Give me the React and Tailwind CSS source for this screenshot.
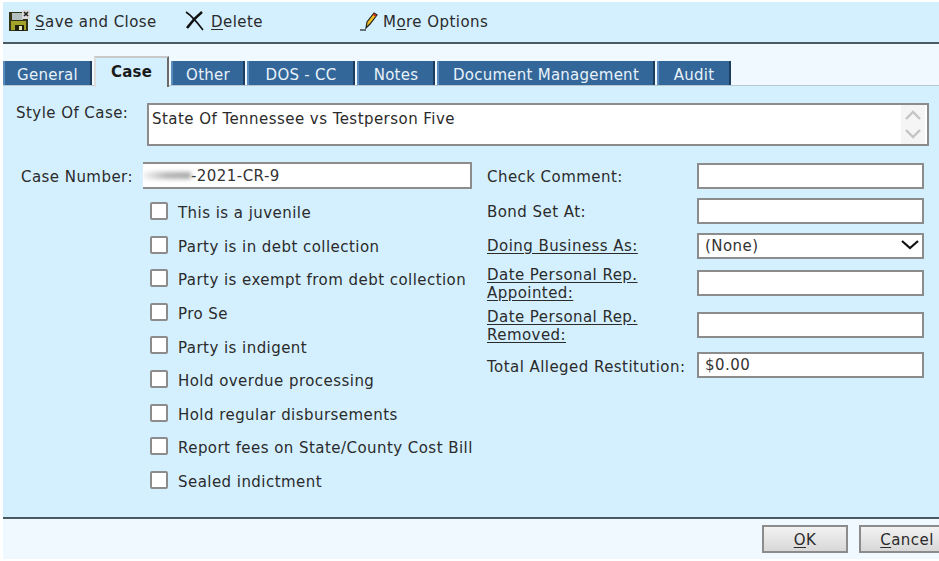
import React from 'react';

const SaveIcon = () => (
    <svg width="22" height="22" viewBox="0 0 22 22" className="shrink-0">
        <path d="M1 2h19v19H1z" fill="#33331a" />
        <path d="M4 3h11v7H4z" fill="#b4c0c0" />
        <path d="M3 11h15v9H3z" fill="#a3a32a" />
        <path d="M7 15h9v6H7z" fill="#20200f" />
        <path d="M11 16h3v4h-3z" fill="#e5e5c0" />
        <path d="M14 0h8v9h-8z" fill="#dcdcdc" />
        <path d="M16 2l4 4M20 2l-4 4" stroke="#222" strokeWidth="1.6" />
    </svg>
);

const DeleteIcon = () => (
    <svg width="20" height="20" viewBox="0 0 20 20" className="shrink-0">
        <path d="M1 1c6 4 11 10 17 18" stroke="#111" strokeWidth="1.6" fill="none" />
        <path d="M17 1C12 5 7 10 2 17" stroke="#111" strokeWidth="2.6" fill="none" />
    </svg>
);

const PencilIcon = () => (
    <svg width="20" height="20" viewBox="0 0 20 20" className="shrink-0">
        <path d="M1 19h6" stroke="#222" strokeWidth="1.2" />
        <path d="M7 17l1-6 7-9 3 2-7 9z" fill="#f0c020" stroke="#222" strokeWidth="1.2" />
        <path d="M14 3l3 2" stroke="#c03020" strokeWidth="2" />
    </svg>
);

const Hotkey = ({ text }) => (
    <>
        <span className="underline underline-offset-2">{text[0]}</span>
        {text.slice(1)}
    </>
);

const tabs = [
    { label: 'General', w: 'w-[89px]' },
    { label: 'Case', w: 'w-[75px]', active: true },
    { label: 'Other', w: 'w-[74px]' },
    { label: 'DOS - CC', w: 'w-[108px]' },
    { label: 'Notes', w: 'w-[78px]' },
    { label: 'Document Management', w: 'w-[218px]' },
    { label: 'Audit', w: 'w-[74px]' },
];

const checks = [
    'This is a juvenile',
    'Party is in debt collection',
    'Party is exempt from debt collection',
    'Pro Se',
    'Party is indigent',
    'Hold overdue processing',
    'Hold regular disbursements',
    'Report fees on State/County Cost Bill',
    'Sealed indictment',
];

const inputClass = 'h-[26px] w-[227px] bg-white border-2 border-[#8c8c8c] px-[6px] flex items-center text-[#333]';

const RightRow = ({ h, mb, children, value, select }) => (
    <div className={`flex items-center ${h} ${mb}`}>
        <div className="w-[210px] leading-[18px]">{children}</div>
        <div className={`${inputClass} justify-between`}>
            <span className="pt-[1px]">{value}</span>
            {select && (
                <svg width="18" height="10" viewBox="0 0 18 10" className="-mr-[3px] -mt-[2px]">
                    <path d="M1 1l8 7 8-7" stroke="#111" strokeWidth="2.2" fill="none" />
                </svg>
            )}
        </div>
    </div>
);

const App = () => {
    return (
        <div className="w-[939px] h-[561px] bg-white pl-[3px] pt-[2px] overflow-hidden font-['DejaVu_Sans',sans-serif] text-[15px] tracking-[0.45px] text-[#2b2b2b]">
            {/* Toolbar */}
            <div className="h-[40px] bg-[#d4f0ff] flex items-center pl-[5px] pb-[3px]">
                <div className="flex items-center gap-[5px] w-[177px]">
                    <SaveIcon />
                    <span className="pt-[3px]"><Hotkey text="Save and Close" /></span>
                </div>
                <div className="flex items-center gap-[6px] w-[174px]">
                    <DeleteIcon />
                    <span className="pt-[3px]"><Hotkey text="Delete" /></span>
                </div>
                <div className="flex items-center gap-[4px]">
                    <PencilIcon />
                    <span className="pt-[3px]"><span>M</span><span className="underline underline-offset-2">o</span>re Options</span>
                </div>
            </div>
            <div className="h-[2px] bg-[#4a5a62]" />

            {/* Tabs */}
            <div className="h-[41px] bg-[#f0f9ff] flex items-end gap-[2px] relative tracking-[0.25px]">
                {tabs.map((tab) =>
                    tab.active ? (
                        <div
                            key={tab.label}
                            className={`${tab.w} h-[31px] -mb-[2px] pb-[1px] bg-[#d4f0ff] border-t-2 border-l-2 border-r-2 border-t-[#c8c8c8] border-l-[#dcdcdc] border-r-[#6b6b6b] flex items-center justify-center font-bold text-[#1a1a1a] relative z-10`}
                        >
                            {tab.label}
                        </div>
                    ) : (
                        <div
                            key={tab.label}
                            className={`${tab.w} h-[24px] pt-[5px] bg-[#336699] border-l-2 border-l-[#5b8cc0] border-r-2 border-r-[#1d3d5e] flex items-center justify-center text-[#e8f2fa]`}
                        >
                            {tab.label}
                        </div>
                    )
                )}
            </div>

            {/* Form */}
            <div className="h-[432px] bg-[#d4f0ff] border-t border-t-[#b8c8d0] pt-[17px] relative">
                <div className="flex items-start">
                    <div className="w-[144px] pl-[13px] pt-[1px] leading-[18px]">Style Of Case:</div>
                    <div className="w-[782px] h-[43px] bg-white border-2 border-[#8c8c8c] pl-[3px] pr-[2px] flex justify-between">
                        <span className="pt-[4px] leading-[20px]">State Of Tennessee vs Testperson Five</span>
                        <div className="w-[24px] bg-[#f5f5f5] flex flex-col items-center justify-center gap-[7px]">
                            <svg width="18" height="11" viewBox="0 0 18 11"><path d="M2 9l7-7 7 7" stroke="#c4c4c4" strokeWidth="2.4" fill="none" /></svg>
                            <svg width="18" height="11" viewBox="0 0 18 11"><path d="M2 2l7 7 7-7" stroke="#c4c4c4" strokeWidth="2.4" fill="none" /></svg>
                        </div>
                    </div>
                </div>

                <div className="flex mt-[16px]">
                    {/* Left column */}
                    <div className="w-[484px]">
                        <div className="flex items-center">
                            <div className="w-[140px] pl-[18px] pt-[4px]">Case Number:</div>
                            <div className="w-[329px] h-[27px] bg-white border-t-2 border-r-2 border-b-2 border-[#8c8c8c] flex items-center pl-[48px] relative">
                                <div className="absolute left-0 top-[8px] w-[48px] h-[7px] bg-gradient-to-r from-[#f5f5f5] via-[#b4b4b4] to-[#a8a8a8] blur-[2px]" />
                                <span className="text-[#333] pt-[2px]">-2021-CR-9</span>
                            </div>
                        </div>
                        <div className="pl-[147px] mt-[13px] flex flex-col gap-[15.6px]">
                            {checks.map((c) => (
                                <div key={c} className="flex items-center h-[18px] gap-[10px]">
                                    <span className="w-[18px] h-[18px] bg-white border-2 border-[#8c8c8c] rounded-[2px] shrink-0" />
                                    <span className="whitespace-nowrap pt-[5px]">{c}</span>
                                </div>
                            ))}
                        </div>
                    </div>

                    {/* Right column */}
                    <div>
                        <RightRow h="h-[27px]" mb="mb-[9px]"><span className="block pt-[2px]">Check Comment:</span></RightRow>
                        <RightRow h="h-[26px]" mb="mb-[8px]"><span className="block pt-[2px]">Bond Set At:</span></RightRow>
                        <RightRow h="h-[27px]" mb="mb-[10px]" value="(None)" select>
                            <span className="underline underline-offset-2">Doing Business As:</span>
                        </RightRow>
                        <RightRow h="h-[28px]" mb="mb-[15px]">
                            <span className="underline underline-offset-2 block pt-[2px]">Date Personal Rep. Appointed:</span>
                        </RightRow>
                        <RightRow h="h-[26px]" mb="mb-[14px]">
                            <span className="underline underline-offset-2 block pt-[2px]">Date Personal Rep. Removed:</span>
                        </RightRow>
                        <RightRow h="h-[26px]" mb="" value="$0.00"><span className="block pt-[3px]">Total Alleged Restitution:</span></RightRow>
                    </div>
                </div>
            </div>
            <div className="h-[2px] bg-[#4a5a62]" />

            {/* Footer */}
            <div className="h-[40px] bg-[#f0f9ff] flex items-center justify-end gap-[11px] pb-[1px] pr-[2px] w-[954px]">
                <button className="w-[86px] h-[28px] pt-[2px] bg-gradient-to-b from-[#f2f2f2] to-[#d8d8d8] border-2 border-[#8c8c8c] text-[#2b2b2b]">
                    <Hotkey text="OK" />
                </button>
                <button className="w-[96px] h-[28px] pt-[2px] bg-gradient-to-b from-[#f2f2f2] to-[#d8d8d8] border-2 border-[#8c8c8c] text-[#2b2b2b]">
                    <Hotkey text="Cancel" />
                </button>
            </div>
        </div>
    );
};

export default App;
